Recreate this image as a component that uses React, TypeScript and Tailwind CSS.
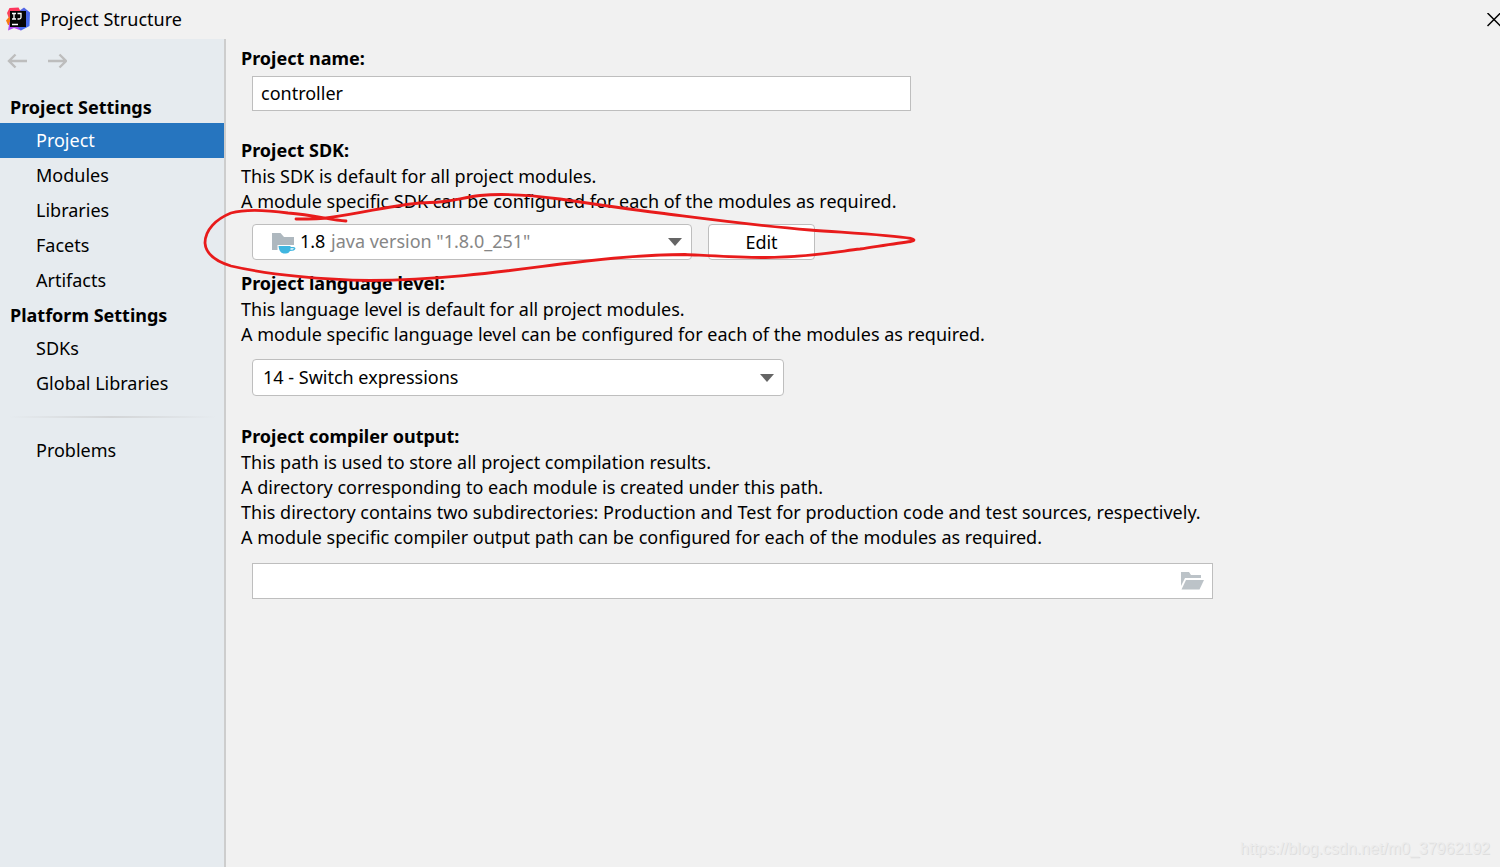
import type { ReactNode } from "react";

const projectItems = ["Project", "Modules", "Libraries", "Facets", "Artifacts"];
const platformItems = ["SDKs", "Global Libraries"];

function IdeaLogo() {
  return (
    <svg width="26" height="26" viewBox="0 0 26 26" aria-hidden="true">
      <defs>
        <linearGradient id="blue" x1="0" y1="0" x2="1" y2="1">
          <stop offset="0" stopColor="#5b5fe0" />
          <stop offset="1" stopColor="#3f6fee" />
        </linearGradient>
        <linearGradient id="pink" x1="0" y1="0" x2="0" y2="1">
          <stop offset="0" stopColor="#fe315d" />
          <stop offset="0.45" stopColor="#fb4a5a" />
          <stop offset="0.6" stopColor="#f97a12" />
          <stop offset="1" stopColor="#f97a12" />
        </linearGradient>
      </defs>
      <path d="M14 4L19 0.500L25 5.500L24.500 19L16 23.500L10 20Z" fill="url(#blue)" />
      <path d="M4.500 1L13.500 0.500L16 5L11 19L3 18L1 13.500L3.500 10.500L2 6Z" fill="url(#pink)" />
      <path d="M4.500 15L12 19L16 23.500L9 21L3 23.500Z" fill="#b148ee" />
      <rect x="5" y="4" width="16" height="16" fill="#050505" />
      <path d="M7 6.500H11M9 6.500V12M7 12H11M12.500 6.500H16V10.500Q16 12 14 12H12.500M7 17.500H13" fill="none" stroke="#fff" strokeWidth="1.300" />
    </svg>
  );
}

function Arrow({ forward = false }: { forward?: boolean }) {
  return (
    <svg width="20" height="16" viewBox="0 0 20 16" fill="none" stroke="#bdbdbd" strokeWidth="2.400" aria-hidden="true">
      <path d={forward ? "M1 8H19M12.500 1.500L19 8L12.500 14.500" : "M20 8H2M8.500 1.500L2 8L8.500 14.500"} />
    </svg>
  );
}

function Chevron() {
  return (
    <svg className="pointer-events-none absolute top-1/2 right-2.5 -translate-y-1/2" width="14" height="8" viewBox="0 0 14 8" aria-hidden="true">
      <path d="M0 0H14L7 8Z" fill="#656565" />
    </svg>
  );
}

function SdkIcon() {
  return (
    <svg className="pointer-events-none absolute top-2 left-5" width="24" height="22" viewBox="0 0 24 22" aria-hidden="true">
      <path d="M0 1H8.500L12 5H22V18H0Z" fill="#aeb8bf" />
      <path d="M5.500 13H24V22H5.500Z" fill="#fff" />
      <path d="M6.500 14H18.500V15H21.500Q23.500 15 23.500 16.500Q23 19 18 19Q16.500 21.500 14 21.500H11.500Q7 20.500 6.500 14ZM18.500 16.200V17.800Q21.500 17.800 22 16.200Z" fill="#40b6e0" fillRule="evenodd" />
    </svg>
  );
}

function FolderIcon() {
  return (
    <svg width="23" height="18" viewBox="0 0 23 18" fill="#bcc3c8" aria-hidden="true">
      <path d="M0 0H8L10 3H20V6H4L0 14Z" />
      <path d="M5 8H23L18.500 17.500H0.500Z" />
    </svg>
  );
}

function NavItem({ label, active = false }: { label: string; active?: boolean }) {
  return (
    <li>
      <a
        href="#"
        aria-current={active ? "page" : undefined}
        className={active ? "flex h-[35px] items-center bg-[#2675bf] pl-9 text-white" : "flex h-[35px] items-center pl-9"}
      >
        {label}
      </a>
    </li>
  );
}

function NavGroup({ title, items, current }: { title: string; items: string[]; current?: string }) {
  return (
    <section>
      <h2 className="flex h-[33px] items-center pt-0.5 pl-2.5 font-bold">{title}</h2>
      <ul>
        {items.map((item) => (
          <NavItem key={item} label={item} active={item === current} />
        ))}
      </ul>
    </section>
  );
}

function Description({ children }: { children: ReactNode }) {
  return <div className="pt-px leading-[25px]">{children}</div>;
}

const heading = "block leading-[26px] font-bold";
const control = "w-full appearance-none border border-[#bebebe] bg-white outline-none";

export default function App() {
  return (
    <div className="relative flex min-h-screen flex-col overflow-x-hidden bg-[#f1f1f1] font-['Noto_Sans','Open_Sans',sans-serif] text-[18px] text-black">
      <header className="flex h-[39px] items-center pl-[5px]">
        <IdeaLogo />
        <h1 className="ml-[9px]">Project Structure</h1>
        <button type="button" aria-label="Close" className="ml-auto">
          <svg width="13" height="14" viewBox="0 0 13 14" fill="none" stroke="#000" strokeWidth="1.500" aria-hidden="true">
            <path d="M0.500 0L13.500 13M0.500 13L13.500 0" />
          </svg>
        </button>
      </header>

      <div className="flex grow">
        <nav className="w-[226px] shrink-0 border-r-2 border-[#cdcdcd] bg-[#e6ebef]">
          <div className="flex h-[51px] items-start gap-5 pt-3.5 pl-[7px]">
            <button type="button" aria-label="Back"><Arrow /></button>
            <button type="button" aria-label="Forward"><Arrow forward /></button>
          </div>
          <NavGroup title="Project Settings" items={projectItems} current="Project" />
          <NavGroup title="Platform Settings" items={platformItems} />
          <hr className="mx-2 my-[15px] h-0.5 border-0 bg-linear-to-r from-transparent via-[#d3d5d7] to-transparent" />
          <ul>
            <NavItem label="Problems" />
          </ul>
        </nav>

        <main className="min-w-0 grow pt-1.5 pr-4 pl-[15px]">
          <label htmlFor="name" className={heading}>Project name:</label>
          <div className="mt-[5px] ml-[11px] max-w-[659px]">
            <input id="name" defaultValue="controller" className={`${control} h-[35px] px-2 pb-0.5`} />
          </div>

          <label htmlFor="sdk" className={`${heading} mt-[26px]`}>Project SDK:</label>
          <Description>
            <p>This SDK is default for all project modules.</p>
            <p>A module specific SDK can be configured for each of the modules as required.</p>
          </Description>
          <div className="mt-2.5 ml-[11px] flex gap-4">
            <div className="relative w-[440px]">
              <select id="sdk" className={`${control} h-9 rounded pb-0.5 pl-[47px]`}>
                <option>1.8</option>
              </select>
              <SdkIcon />
              <span className="pointer-events-none absolute inset-y-0 left-[79px] flex items-center pb-0.5 text-[#868686]">java version "1.8.0_251"</span>
              <Chevron />
            </div>
            <button type="button" className="h-9 w-[107px] rounded border border-[#bebebe] bg-white">Edit</button>
          </div>

          <label htmlFor="level" className={`${heading} mt-2.5`}>Project language level:</label>
          <Description>
            <p>This language level is default for all project modules.</p>
            <p>A module specific language level can be configured for each of the modules as required.</p>
          </Description>
          <div className="relative mt-3 ml-[11px] max-w-[532px]">
            <select id="level" className={`${control} h-[37px] rounded px-2.5`}>
              <option>14 - Switch expressions</option>
            </select>
            <Chevron />
          </div>

          <label htmlFor="output" className={`${heading} mt-[27px]`}>Project compiler output:</label>
          <Description>
            <p>This path is used to store all project compilation results.</p>
            <p>A directory corresponding to each module is created under this path.</p>
            <p>This directory contains two subdirectories: Production and Test for production code and test sources, respectively.</p>
            <p>A module specific compiler output path can be configured for each of the modules as required.</p>
          </Description>
          <div className="mt-[13px] ml-[11px] flex h-9 max-w-[961px] items-center border border-[#bebebe] bg-white pr-2">
            <input id="output" className="min-w-0 grow px-2 outline-none" />
            <button type="button" aria-label="Browse"><FolderIcon /></button>
          </div>
        </main>
      </div>

      <svg className="pointer-events-none absolute top-0 left-0" width="930" height="300" viewBox="0 0 930 300" fill="none" stroke="#e81b1b" strokeWidth="2.800" strokeLinecap="round" strokeLinejoin="round" aria-hidden="true">
        <path d="M346 221C330 220 315 215 288 213C270 210.500 245 209 231 213C216 219 205 230 205 243C206 256 218 262 231 266C270 275 325 280 370 280.500C450 280 520 269 570 263C610 258 650 254.500 685 254.500C715 256 740 257.500 762 257.500C800 258 835 252 860 249C880 246 898 243 911 241.500Q917 240 911 238.500C890 235 850 233 810 230C750 225 700 218 660 213C620 208 580 202 560 199C530 195 500 193.500 480 195.500C460 198 450 202 430 202.500C400 203 370 212 330 217.500C320 219 310 219 296 219" />
      </svg>
      <span className="pointer-events-none absolute right-2.5 bottom-2 font-['Liberation_Sans',sans-serif] text-[16px] leading-5 text-[#ececec] [text-shadow:1px_1px_0_#dedede]">
        https://blog.csdn.net/m0_37962192
      </span>
    </div>
  );
}
